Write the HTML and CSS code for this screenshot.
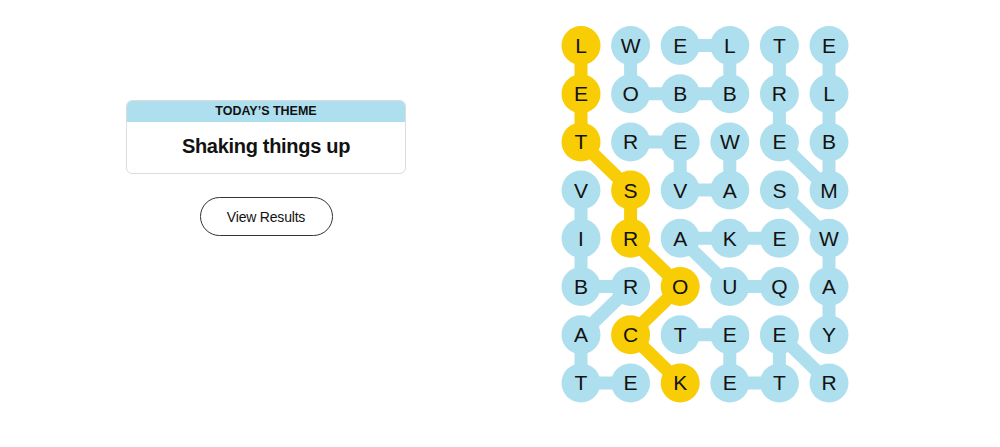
FILE: index.html
```html
<!DOCTYPE html>
<html lang="en">
<head>
<meta charset="utf-8">
<title>Strands</title>
<link rel="stylesheet" href="styles.css">
</head>
<body>
<main class="page">
  <section class="side">
    <div class="theme-card">
      <h2 class="theme-label">TODAY’S THEME</h2>
      <p class="theme-text">Shaking things up</p>
    </div>
    <button class="results-btn" type="button">View Results</button>
  </section>

  <section class="board">
    <svg class="board-svg" width="300" height="390" viewBox="0 0 300 390" xmlns="http://www.w3.org/2000/svg">
      <!-- cell (c, r) centre: x = 25 + 49.6c, y = 25.5 + 48.2r -->
      <g class="links found" stroke-linecap="round">
        <!-- WOBBLE -->
        <polyline points="74.6,25.5 74.6,73.7 124.2,73.7 173.8,73.7 173.8,25.5 124.2,25.5"/>
        <!-- TREMBLE -->
        <polyline points="223.4,25.5 223.4,73.7 223.4,121.9 273,170.1 273,121.9 273,73.7 273,25.5"/>
        <!-- WAVER -->
        <polyline points="173.8,121.9 173.8,170.1 124.2,170.1 124.2,121.9 74.6,121.9"/>
        <!-- VIBRATE -->
        <polyline points="25,170.1 25,218.3 25,266.5 74.6,266.5 25,314.7 25,362.9 74.6,362.9"/>
        <!-- SWAY -->
        <polyline points="223.4,170.1 273,218.3 273,266.5 273,314.7"/>
        <!-- QUAKE -->
        <polyline points="223.4,266.5 173.8,266.5 124.2,218.3 173.8,218.3 223.4,218.3"/>
        <!-- TEETER -->
        <polyline points="124.2,314.7 173.8,314.7 173.8,362.9 223.4,362.9 223.4,314.7 273,362.9"/>
      </g>
      <g class="links span" stroke-linecap="round">
        <!-- LETSROCK -->
        <polyline points="25,25.5 25,73.7 25,121.9 74.6,170.1 74.6,218.3 124.2,266.5 74.6,314.7 124.2,362.9"/>
      </g>

      <g class="cells">
        <g class="row">
          <circle class="dot span" cx="25" cy="25.5" r="19.5"/><text x="25" y="25.5">L</text>
          <circle class="dot found" cx="74.6" cy="25.5" r="19.5"/><text x="74.6" y="25.5">W</text>
          <circle class="dot found" cx="124.2" cy="25.5" r="19.5"/><text x="124.2" y="25.5">E</text>
          <circle class="dot found" cx="173.8" cy="25.5" r="19.5"/><text x="173.8" y="25.5">L</text>
          <circle class="dot found" cx="223.4" cy="25.5" r="19.5"/><text x="223.4" y="25.5">T</text>
          <circle class="dot found" cx="273" cy="25.5" r="19.5"/><text x="273" y="25.5">E</text>
        </g>
        <g class="row">
          <circle class="dot span" cx="25" cy="73.7" r="19.5"/><text x="25" y="73.7">E</text>
          <circle class="dot found" cx="74.6" cy="73.7" r="19.5"/><text x="74.6" y="73.7">O</text>
          <circle class="dot found" cx="124.2" cy="73.7" r="19.5"/><text x="124.2" y="73.7">B</text>
          <circle class="dot found" cx="173.8" cy="73.7" r="19.5"/><text x="173.8" y="73.7">B</text>
          <circle class="dot found" cx="223.4" cy="73.7" r="19.5"/><text x="223.4" y="73.7">R</text>
          <circle class="dot found" cx="273" cy="73.7" r="19.5"/><text x="273" y="73.7">L</text>
        </g>
        <g class="row">
          <circle class="dot span" cx="25" cy="121.9" r="19.5"/><text x="25" y="121.9">T</text>
          <circle class="dot found" cx="74.6" cy="121.9" r="19.5"/><text x="74.6" y="121.9">R</text>
          <circle class="dot found" cx="124.2" cy="121.9" r="19.5"/><text x="124.2" y="121.9">E</text>
          <circle class="dot found" cx="173.8" cy="121.9" r="19.5"/><text x="173.8" y="121.9">W</text>
          <circle class="dot found" cx="223.4" cy="121.9" r="19.5"/><text x="223.4" y="121.9">E</text>
          <circle class="dot found" cx="273" cy="121.9" r="19.5"/><text x="273" y="121.9">B</text>
        </g>
        <g class="row">
          <circle class="dot found" cx="25" cy="170.1" r="19.5"/><text x="25" y="170.1">V</text>
          <circle class="dot span" cx="74.6" cy="170.1" r="19.5"/><text x="74.6" y="170.1">S</text>
          <circle class="dot found" cx="124.2" cy="170.1" r="19.5"/><text x="124.2" y="170.1">V</text>
          <circle class="dot found" cx="173.8" cy="170.1" r="19.5"/><text x="173.8" y="170.1">A</text>
          <circle class="dot found" cx="223.4" cy="170.1" r="19.5"/><text x="223.4" y="170.1">S</text>
          <circle class="dot found" cx="273" cy="170.1" r="19.5"/><text x="273" y="170.1">M</text>
        </g>
        <g class="row">
          <circle class="dot found" cx="25" cy="218.3" r="19.5"/><text x="25" y="218.3">I</text>
          <circle class="dot span" cx="74.6" cy="218.3" r="19.5"/><text x="74.6" y="218.3">R</text>
          <circle class="dot found" cx="124.2" cy="218.3" r="19.5"/><text x="124.2" y="218.3">A</text>
          <circle class="dot found" cx="173.8" cy="218.3" r="19.5"/><text x="173.8" y="218.3">K</text>
          <circle class="dot found" cx="223.4" cy="218.3" r="19.5"/><text x="223.4" y="218.3">E</text>
          <circle class="dot found" cx="273" cy="218.3" r="19.5"/><text x="273" y="218.3">W</text>
        </g>
        <g class="row">
          <circle class="dot found" cx="25" cy="266.5" r="19.5"/><text x="25" y="266.5">B</text>
          <circle class="dot found" cx="74.6" cy="266.5" r="19.5"/><text x="74.6" y="266.5">R</text>
          <circle class="dot span" cx="124.2" cy="266.5" r="19.5"/><text x="124.2" y="266.5">O</text>
          <circle class="dot found" cx="173.8" cy="266.5" r="19.5"/><text x="173.8" y="266.5">U</text>
          <circle class="dot found" cx="223.4" cy="266.5" r="19.5"/><text x="223.4" y="266.5">Q</text>
          <circle class="dot found" cx="273" cy="266.5" r="19.5"/><text x="273" y="266.5">A</text>
        </g>
        <g class="row">
          <circle class="dot found" cx="25" cy="314.7" r="19.5"/><text x="25" y="314.7">A</text>
          <circle class="dot span" cx="74.6" cy="314.7" r="19.5"/><text x="74.6" y="314.7">C</text>
          <circle class="dot found" cx="124.2" cy="314.7" r="19.5"/><text x="124.2" y="314.7">T</text>
          <circle class="dot found" cx="173.8" cy="314.7" r="19.5"/><text x="173.8" y="314.7">E</text>
          <circle class="dot found" cx="223.4" cy="314.7" r="19.5"/><text x="223.4" y="314.7">E</text>
          <circle class="dot found" cx="273" cy="314.7" r="19.5"/><text x="273" y="314.7">Y</text>
        </g>
        <g class="row">
          <circle class="dot found" cx="25" cy="362.9" r="19.5"/><text x="25" y="362.9">T</text>
          <circle class="dot found" cx="74.6" cy="362.9" r="19.5"/><text x="74.6" y="362.9">E</text>
          <circle class="dot span" cx="124.2" cy="362.9" r="19.5"/><text x="124.2" y="362.9">K</text>
          <circle class="dot found" cx="173.8" cy="362.9" r="19.5"/><text x="173.8" y="362.9">E</text>
          <circle class="dot found" cx="223.4" cy="362.9" r="19.5"/><text x="223.4" y="362.9">T</text>
          <circle class="dot found" cx="273" cy="362.9" r="19.5"/><text x="273" y="362.9">R</text>
        </g>
      </g>
    </svg>
  </section>
</main>
</body>
</html>
```

FILE: styles.css
```css
* {
  box-sizing: border-box;
}

html,
body {
  margin: 0;
  background: #ffffff;
  font-family: "Liberation Sans", Arial, sans-serif;
  color: #121212;
}

.page {
  display: flex;
  align-items: flex-start;
  width: 1000px;
  height: 447px;
  padding-top: 20px;
}

.side {
  display: flex;
  flex-direction: column;
  align-items: center;
  width: 280px;
  margin-left: 126px;
  margin-top: 80px;
}

.theme-card {
  width: 280px;
  border: 1px solid #dcdcdc;
  border-radius: 6px;
  overflow: hidden;
  text-align: center;
}

.theme-label {
  margin: 0;
  height: 21px;
  line-height: 21px;
  background: #aedfee;
  font-size: 12.5px;
  font-weight: 700;
  letter-spacing: 0;
  color: #121212;
}

.theme-text {
  margin: 0;
  height: 51px;
  line-height: 49px;
  font-size: 20px;
  font-weight: 700;
  letter-spacing: -0.3px;
  color: #121212;
}

.results-btn {
  margin-top: 23px;
  width: 133px;
  height: 39px;
  border: 1px solid #333333;
  border-radius: 20px;
  background: #ffffff;
  font-family: "Liberation Sans", Arial, sans-serif;
  font-size: 14px;
  color: #121212;
  padding: 0;
  letter-spacing: -0.2px;
}

.board {
  margin-left: 150px;
}

.board-svg {
  display: block;
}

.links polyline {
  fill: none;
  stroke-width: 13;
  stroke-linejoin: round;
}

.links.found polyline {
  stroke: #aedfee;
}

.links.span polyline {
  stroke: #f8cd05;
}

.dot.found {
  fill: #aedfee;
}

.dot.span {
  fill: #f8cd05;
}

.cells text {
  font-family: "Liberation Sans", Arial, sans-serif;
  font-size: 21px;
  fill: #121212;
  text-anchor: middle;
  dominant-baseline: central;
}
```
